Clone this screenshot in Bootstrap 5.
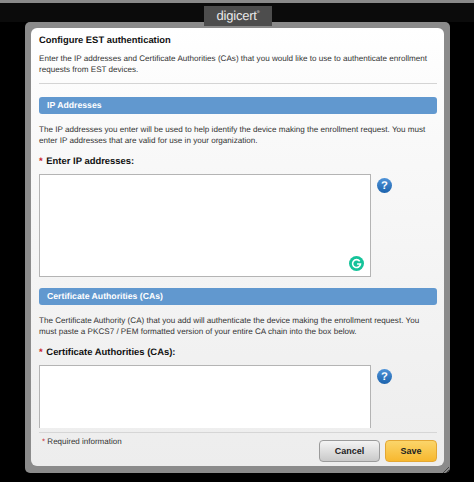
<!DOCTYPE html>
<html lang="en">
<head>
<meta charset="utf-8">
<title>Configure EST authentication</title>
<link href="https://cdn.jsdelivr.net/npm/bootstrap@5.3.0/dist/css/bootstrap.min.css" rel="stylesheet">
<style>
html,body{height:482px;overflow:hidden;}
body{background:#000;font-family:"Liberation Sans",Arial,sans-serif;color:#222;position:relative;text-rendering:geometricPrecision;}
.top-strip{height:3px;background:#8a8a8a;}
.bg-band{height:19px;background:#0b0b0b;}
.logo-tab{position:absolute;left:204px;top:6px;width:68px;height:20px;background:#4d4d4d;color:#e8e8e8;font-size:13px;line-height:19px;text-align:center;letter-spacing:-.2px;z-index:2;}
.logo-tab sup{font-size:4px;top:-7px;}
.win-frame{margin:0 24px 0 25px;height:451px;background:#8b8b8b;border-radius:5px;padding:6px 6px 7px 6px;}
.win-inner{height:100%;border-radius:6px;background:linear-gradient(#fff 0,#f9f9f9 25%,#ededed 100%);display:flex;flex-direction:column;overflow:hidden;}
.win-scroll{height:400px;overflow:hidden;padding:5px 7px 0 8px;flex:none;}
.dlg-title{font-size:9.4px;font-weight:700;color:#111;line-height:13px;margin:0;}
.dlg-text{font-size:8.1px;line-height:11px;color:#333;margin:0;}
.intro{margin-top:7px;}
.rule{height:1px;background:#d4d4d4;margin:8px 0 13px;}
.sect-bar{height:17px;background:#6198cf;border-radius:3px;color:#fff;font-size:8.7px;font-weight:700;line-height:17px;padding-left:8px;}
.sect-bar-next{margin-top:11px;}
.sect-text{margin-top:10px;}
.fld-label{font-size:9.45px;font-weight:700;color:#111;line-height:13px;margin:9px 0 6px;}
.fld-label .req{color:#c8202a;margin-right:1px;}
.fld-row{display:flex;align-items:flex-start;}
.fake-area{position:relative;width:332px;flex:none;background:#fff;border:1px solid #b4b4b4;}
.help-dot{width:15px;height:15px;margin:4px 0 0 6px;flex:none;}
.g-badge{position:absolute;right:6px;bottom:5px;width:15px;height:15px;}
.footer-zone{margin:4px 7px 0 8px;border-top:1px solid #d6d6d6;display:flex;justify-content:space-between;flex:1;}
.req-note{font-size:8px;color:#333;padding:3px 0 0 3px;line-height:11px;}
.req-note span{color:#c8202a;}
.btn-cancel,.btn-save{font-size:9px;font-weight:700;color:#222;height:22px;padding:0;line-height:20px;border-radius:4px;}
.btn-cancel{width:61px;background:linear-gradient(#f4f4f4,#c9c9c9);border:1px solid #9b9b9b;}
.btn-save{width:52px;background:linear-gradient(#fbd56a,#f7b82f);border:1px solid #e3a734;}
.btn-cancel:hover{background:linear-gradient(#f4f4f4,#c9c9c9);color:#222;}
.btn-save:hover{background:linear-gradient(#fbd56a,#f7b82f);color:#222;}
.btn-gap{gap:5px;padding-top:7px;}
.field-one{height:103px;}
.field-two{height:70px;border-bottom:0;}
.grip{position:absolute;left:442px;top:466px;width:8px;height:7px;}
</style>
</head>
<body>
<div class="top-strip"></div>
<div class="bg-band"></div>
<div class="logo-tab">digicert<sup>®</sup></div>
<div class="win-frame">
  <div class="win-inner">
    <div class="win-scroll">
      <h1 class="dlg-title">Configure EST authentication</h1>
      <p class="dlg-text intro">Enter the IP addresses and Certificate Authorities (CAs) that you would like to use to authenticate enrollment<br>requests from EST devices.</p>
      <div class="rule"></div>
      <div class="sect-bar">IP Addresses</div>
      <p class="dlg-text sect-text">The IP addresses you enter will be used to help identify the device making the enrollment request. You must<br>enter IP addresses that are valid for use in your organization.</p>
      <p class="fld-label"><span class="req">*</span> Enter IP addresses:</p>
      <div class="fld-row">
        <div class="fake-area field-one">
          <svg class="g-badge" viewBox="0 0 16 16" aria-hidden="true"><circle cx="8" cy="8" r="8" fill="#15c39a"/><path d="M11.4 5.6A4.2 4.2 0 1 0 12.2 8.6H8.6" fill="none" stroke="#fff" stroke-width="1.7"/></svg>
        </div>
        <svg class="help-dot" viewBox="0 0 16 16" aria-hidden="true"><defs><linearGradient id="hg" x1="0" y1="0" x2="0" y2="1"><stop offset="0" stop-color="#4f93d8"/><stop offset="1" stop-color="#1c63ad"/></linearGradient></defs><circle cx="8" cy="8" r="8" fill="url(#hg)"/><text x="8" y="12.2" text-anchor="middle" font-family="Liberation Sans" font-weight="700" font-size="12" fill="#fff">?</text></svg>
      </div>
      <div class="sect-bar sect-bar-next">Certificate Authorities (CAs)</div>
      <p class="dlg-text sect-text">The Certificate Authority (CA) that you add will authenticate the device making the enrollment request. You<br>must paste a PKCS7 / PEM formatted version of your entire CA chain into the box below.</p>
      <p class="fld-label"><span class="req">*</span> Certificate Authorities (CAs):</p>
      <div class="fld-row">
        <div class="fake-area field-two"></div>
        <svg class="help-dot" viewBox="0 0 16 16" aria-hidden="true"><circle cx="8" cy="8" r="8" fill="url(#hg)"/><text x="8" y="12.2" text-anchor="middle" font-family="Liberation Sans" font-weight="700" font-size="12" fill="#fff">?</text></svg>
      </div>
    </div>
    <div class="footer-zone">
      <div class="req-note"><span>*</span> Required information</div>
      <div class="d-flex btn-gap align-items-start">
        <button type="button" class="btn btn-cancel">Cancel</button>
        <button type="button" class="btn btn-save">Save</button>
      </div>
    </div>
  </div>
</div>
<svg class="grip" viewBox="0 0 8 7" aria-hidden="true"><path d="M1 7L7 1M4 7L7 4" stroke="#444" stroke-width="1"/></svg>
</body>
</html>
